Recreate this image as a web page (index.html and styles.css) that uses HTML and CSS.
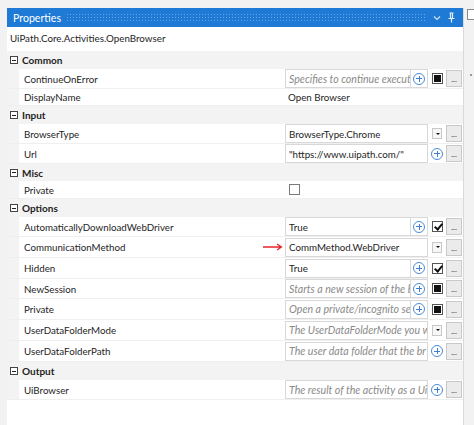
FILE: index.html
```html
<!DOCTYPE html>
<html>
<head>
<meta charset="utf-8">
<link rel="stylesheet" href="styles.css">
</head>
<body>
<div class="panel">
  <div class="titlebar">
    <span class="title">Properties</span>
    <span class="dots-fill"></span>
    <svg class="chev" width="8" height="6" viewBox="0 0 8 6"><path d="M1 1.5 L4 4.5 L7 1.5" fill="none" stroke="#cfe3f7" stroke-width="1.2"/></svg>
    <svg class="pin" width="7" height="11" viewBox="0 0 7 11"><path d="M1.5 1 H5.5 M2.5 1 V6 M4.5 1 V6 M0.5 6.5 H6.5 M3.5 6.5 V10.5" fill="none" stroke="#e6f0fb" stroke-width="1.2"/></svg>
  </div>
  <div class="subtitle">UiPath.Core.Activities.OpenBrowser</div>

  <div class="cat h18"><span class="toggle"></span><span class="cat-name">Common</span></div>
  <div class="row h20">
    <div class="gutter"></div><div class="label">ContinueOnError</div>
    <div class="value">
      <div class="box"><span class="ph">Specifies to continue execut</span><span class="inner-plus"><span class="plus"></span></span></div>
      <div class="slot"><span class="chk fill"></span></div>
      <div class="more">...</div>
    </div>
  </div>
  <div class="row h17">
    <div class="gutter"></div><div class="label">DisplayName</div>
    <div class="value"><span class="plain">Open Browser</span></div>
  </div>

  <div class="cat h18"><span class="toggle"></span><span class="cat-name">Input</span></div>
  <div class="row h20">
    <div class="gutter"></div><div class="label">BrowserType</div>
    <div class="value">
      <div class="box"><span class="txt">BrowserType.Chrome</span></div>
      <div class="slot"><span class="dd"></span></div>
      <div class="more">...</div>
    </div>
  </div>
  <div class="row h20">
    <div class="gutter"></div><div class="label">Url</div>
    <div class="value">
      <div class="box"><span class="txt">"https://www.uipath.com/"</span></div>
      <div class="slot"><span class="plus"></span></div>
      <div class="more">...</div>
    </div>
  </div>

  <div class="cat h17"><span class="toggle"></span><span class="cat-name">Misc</span></div>
  <div class="row h18">
    <div class="gutter"></div><div class="label">Private</div>
    <div class="value"><span class="chk plain-chk"></span></div>
  </div>

  <div class="cat h18"><span class="toggle"></span><span class="cat-name">Options</span></div>
  <div class="row h20">
    <div class="gutter"></div><div class="label">AutomaticallyDownloadWebDriver</div>
    <div class="value">
      <div class="box"><span class="txt">True</span><span class="inner-plus"><span class="plus"></span></span></div>
      <div class="slot"><span class="chk checked"></span></div>
      <div class="more">...</div>
    </div>
  </div>
  <div class="row h21">
    <div class="gutter"></div><div class="label">CommunicationMethod</div>
    <svg class="arrow" width="20" height="8" viewBox="0 0 20 8"><path d="M0 4 H18 M14 1 L18.5 4 L14 7" fill="none" stroke="#e3262b" stroke-width="1.3"/></svg>
    <div class="value">
      <div class="box"><span class="txt">CommMethod.WebDriver</span></div>
      <div class="slot"><span class="dd"></span></div>
      <div class="more">...</div>
    </div>
  </div>
  <div class="row h21">
    <div class="gutter"></div><div class="label">Hidden</div>
    <div class="value">
      <div class="box"><span class="txt">True</span><span class="inner-plus"><span class="plus"></span></span></div>
      <div class="slot"><span class="chk checked"></span></div>
      <div class="more">...</div>
    </div>
  </div>
  <div class="row h20">
    <div class="gutter"></div><div class="label">NewSession</div>
    <div class="value">
      <div class="box"><span class="ph">Starts a new session of the b</span><span class="inner-plus"><span class="plus"></span></span></div>
      <div class="slot"><span class="chk fill"></span></div>
      <div class="more">...</div>
    </div>
  </div>
  <div class="row h21">
    <div class="gutter"></div><div class="label">Private</div>
    <div class="value">
      <div class="box"><span class="ph">Open a private/incognito se</span><span class="inner-plus"><span class="plus"></span></span></div>
      <div class="slot"><span class="chk fill"></span></div>
      <div class="more">...</div>
    </div>
  </div>
  <div class="row h21">
    <div class="gutter"></div><div class="label">UserDataFolderMode</div>
    <div class="value">
      <div class="box"><span class="ph">The UserDataFolderMode you w</span></div>
      <div class="slot"><span class="dd"></span></div>
      <div class="more">...</div>
    </div>
  </div>
  <div class="row h21">
    <div class="gutter"></div><div class="label">UserDataFolderPath</div>
    <div class="value">
      <div class="box"><span class="ph">The user data folder that the br</span></div>
      <div class="slot"><span class="plus"></span></div>
      <div class="more">...</div>
    </div>
  </div>

  <div class="cat h18"><span class="toggle"></span><span class="cat-name">Output</span></div>
  <div class="row h20">
    <div class="gutter"></div><div class="label">UiBrowser</div>
    <div class="value">
      <div class="box"><span class="ph">The result of the activity as a Ui</span></div>
      <div class="slot"><span class="plus"></span></div>
      <div class="more">...</div>
    </div>
  </div>
  <div class="rest"></div>
</div>
<div class="side">
  <span class="side-box"></span>
  <span class="side-dot"></span>
</div>
</body>
</html>
```

FILE: styles.css
```css
* { box-sizing: border-box; }
html, body { margin: 0; padding: 0; }
body {
  width: 474px;
  height: 425px;
  overflow: hidden;
  background: #f2f2f2;
  display: flex;
  font-family: Lato, "Noto Sans", sans-serif;
  font-size: 9.75px;
  color: #1e1e1e;
}
.panel {
  margin: 8px 0 0 7px;
  width: 457px;
  background: #fff;
  border-right: 1px solid #d9d9d9;
  display: flex;
  flex-direction: column;
}
.titlebar {
  height: 19px;
  background: #1f7ad5;
  display: flex;
  align-items: center;
  color: #fff;
  flex: none;
}
.title { padding-left: 6px; padding-right: 5px; font-size: 10.6px; }
.dots-fill {
  flex: 1;
  height: 9px;
  background-image: radial-gradient(circle, rgba(170, 205, 240, 0.55) 0.7px, transparent 0.9px);
  background-size: 3px 3px;
}
.chev { margin-left: 8px; margin-right: 7px; }
.pin { margin-right: 8px; }
.subtitle {
  height: 24px;
  line-height: 23px;
  padding-left: 3px;
  flex: none;
  font-size: 9.8px;
}
.cat {
  display: flex;
  align-items: center;
  background: #f3f3f3;
  flex: none;
}
.toggle {
  width: 8px;
  height: 8px;
  border: 1px solid #444;
  margin-left: 3px;
  margin-right: 4px;
  position: relative;
  background: #fff;
}
.toggle::after {
  content: "";
  position: absolute;
  left: 1px;
  right: 1px;
  top: 2.5px;
  height: 1px;
  background: #222;
}
.cat-name { font-weight: 700; font-size: 10px; }
.h17 { height: 17px; }
.h18 { height: 18px; }
.h20 { height: 20px; }
.h21 { height: 21px; }
.row {
  display: flex;
  position: relative;
  flex: none;
  border-bottom: 1px solid #efefef;
}
.gutter { width: 12px; background: #f3f3f3; flex: none; }
.label {
  flex: 1;
  padding-left: 5px;
  display: flex;
  align-items: center;
  white-space: nowrap;
}
.value {
  width: 178px;
  flex: none;
  display: flex;
  align-items: center;
  padding-right: 1px;
}
.box {
  width: 143px;
  height: 19px;
  border: 1px solid #d8d8d8;
  display: flex;
  align-items: center;
  overflow: hidden;
  flex: none;
}
.txt, .ph {
  flex: 1;
  min-width: 0;
  padding-left: 3px;
  white-space: nowrap;
  overflow: hidden;
}
.ph { font-style: italic; color: #8a8a8a; font-size: 10.6px; }
.inner-plus {
  width: 17px;
  height: 100%;
  border-left: 1px solid #d8d8d8;
  display: flex;
  align-items: center;
  justify-content: center;
  flex: none;
}
.slot {
  width: 18px;
  display: flex;
  justify-content: center;
  align-items: center;
  flex: none;
}
.plus {
  width: 12px;
  height: 12px;
  border: 1px solid #4a8bd6;
  border-radius: 50%;
  position: relative;
  display: block;
}
.plus::before, .plus::after {
  content: "";
  position: absolute;
  background: #3f80d0;
}
.plus::before { left: 2px; right: 2px; top: 4.5px; height: 1px; }
.plus::after { top: 2px; bottom: 2px; left: 4.5px; width: 1px; }
.chk {
  width: 11px;
  height: 11px;
  border: 1px solid #555;
  background: #fff;
  display: block;
  position: relative;
}
.chk.fill::after {
  content: "";
  position: absolute;
  left: 1px; top: 1px; right: 1px; bottom: 1px;
  background: #111;
}
.chk.checked::after {
  content: "";
  position: absolute;
  left: 3px;
  top: 0px;
  width: 3px;
  height: 6px;
  border-right: 2px solid #111;
  border-bottom: 2px solid #111;
  transform: rotate(40deg);
}
.plain-chk {
  width: 11px;
  height: 11px;
  border: 1px solid #7a7a7a;
  margin-left: 4px;
}
.dd {
  width: 10px;
  height: 11px;
  border: 1px solid #c8c8c8;
  background: #f7f7f7;
  display: block;
  position: relative;
}
.dd::after {
  content: "";
  position: absolute;
  left: 2.5px;
  top: 3.5px;
  border-left: 2px solid transparent;
  border-right: 2px solid transparent;
  border-top: 2.5px solid #111;
}
.more {
  width: 16px;
  height: 17px;
  border: 1px solid #c9c9c9;
  background: #ebebeb;
  font-size: 8px;
  line-height: 8px;
  color: #333;
  display: flex;
  align-items: flex-end;
  justify-content: center;
  padding-bottom: 3px;
  flex: none;
  overflow: hidden;
}
.plain { padding-left: 3px; }
.arrow {
  position: absolute;
  left: 256px;
  top: 6px;
}
.rest { flex: 1; }
.side { flex: 1; position: relative; }
.side-box {
  position: absolute;
  left: 3px;
  top: 9px;
  width: 10px;
  height: 11px;
  border: 1px solid #8a8a8a;
  background: #fff;
}
.side-dot {
  position: absolute;
  left: 6px;
  top: 74px;
  width: 2px;
  height: 2px;
  background: #999;
}
```
